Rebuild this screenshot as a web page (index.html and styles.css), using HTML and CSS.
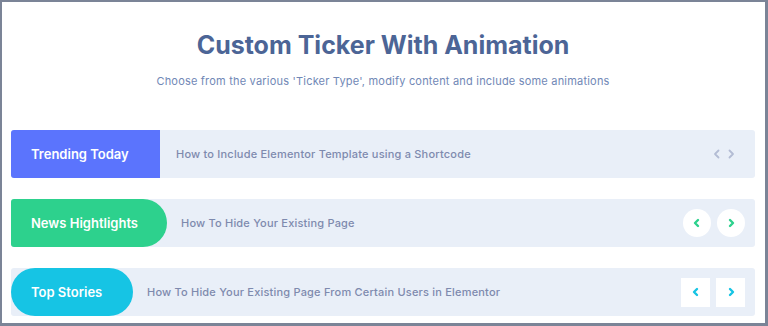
FILE: index.html
```html
<!DOCTYPE html>
<html lang="en">
<head>
    <meta charset="UTF-8">
    <meta name="viewport" content="width=device-width, initial-scale=1.0">
    <title>Custom Ticker With Animation</title>
    <link rel="stylesheet" href="styles.css">
</head>
<body>
    <div class="frame">
        <div class="header">
            <h2>Custom Ticker With Animation</h2>
            <p>Choose from the various 'Ticker Type', modify content and include some animations</p>
        </div>

        <div class="tickers">
            <div class="ticker ticker-trending">
                <div class="label">Trending Today</div>
                <div class="content">How to Include Elementor Template using a Shortcode</div>
                <div class="nav">
                    <span class="nav-btn"><svg viewBox="0 0 10 10"><polyline points="6.5,1.5 3,5 6.5,8.5"/></svg></span>
                    <span class="nav-btn"><svg viewBox="0 0 10 10"><polyline points="3.5,1.5 7,5 3.5,8.5"/></svg></span>
                </div>
            </div>

            <div class="ticker ticker-news">
                <div class="label">News Hightlights</div>
                <div class="content">How To Hide Your Existing Page</div>
                <div class="nav">
                    <span class="nav-btn"><svg viewBox="0 0 10 10"><polyline points="6,2 3,5 6,8"/></svg></span>
                    <span class="nav-btn"><svg viewBox="0 0 10 10"><polyline points="4,2 7,5 4,8"/></svg></span>
                </div>
            </div>

            <div class="ticker ticker-top">
                <div class="label">Top Stories</div>
                <div class="content">How To Hide Your Existing Page From Certain Users in Elementor</div>
                <div class="nav">
                    <span class="nav-btn"><svg viewBox="0 0 10 10"><polyline points="6,2 3,5 6,8"/></svg></span>
                    <span class="nav-btn"><svg viewBox="0 0 10 10"><polyline points="4,2 7,5 4,8"/></svg></span>
                </div>
            </div>
        </div>
    </div>
</body>
</html>
```

FILE: styles.css
```css
body {
    font-family: 'Inter', 'Roboto', sans-serif;
    background-color: #fff;
    margin: 0;
    padding: 0;
}

.frame {
    box-sizing: border-box;
    height: 326px;
    border-style: solid;
    border-color: #7b8497;
    border-width: 2px 3px 3px 2px;
    padding: 0 10px 0 9px;
}

.header {
    text-align: center;
    padding-top: 27px;
}

.header h2 {
    margin: 0;
    font-size: 25px;
    font-weight: 700;
    color: #4c6596;
    line-height: 32px;
}

.header p {
    margin: 13px 0 0;
    font-size: 11px;
    letter-spacing: 0.2px;
    color: #7188b6;
    line-height: 14px;
}

.tickers {
    display: flex;
    flex-direction: column;
    gap: 21px;
    margin-top: 42px;
}

.ticker {
    display: flex;
    align-items: center;
    height: 48px;
    background-color: #e9eff8;
    border-radius: 3px;
}

.label {
    height: 100%;
    display: flex;
    align-items: center;
    padding-left: 20px;
    box-sizing: border-box;
    color: #fff;
    font-size: 13px;
    font-weight: 600;
    flex-shrink: 0;
}

.content {
    flex: 1;
    color: #7e8aae;
    font-size: 11px;
    font-weight: 500;
    letter-spacing: 0.2px;
}

.nav {
    display: flex;
    gap: 6px;
    margin-right: 10px;
}

.nav-btn {
    width: 29px;
    height: 29px;
    display: flex;
    align-items: center;
    justify-content: center;
    background-color: #fff;
}

.nav-btn svg {
    width: 10px;
    height: 10px;
    fill: none;
    stroke-width: 2.4;
    stroke-linecap: round;
    stroke-linejoin: round;
}

/* trending */
.ticker-trending .label {
    width: 149px;
    background-color: #5b74fd;
    border-radius: 3px 0 0 3px;
}

.ticker-trending .content {
    padding-left: 16px;
}

.ticker-trending .nav {
    gap: 0;
    margin-right: 17px;
}

.ticker-trending .nav-btn {
    width: 14px;
    height: 14px;
    background: none;
}

.ticker-trending .nav-btn svg {
    stroke: #b3bcd4;
    stroke-width: 1.8;
}

/* news */
.ticker-news .label {
    width: 156px;
    background-color: #2dd18d;
    border-radius: 3px 24px 24px 3px;
}

.ticker-news .content {
    padding-left: 14px;
}

.ticker-news .nav-btn {
    border-radius: 50%;
    width: 28px;
    height: 28px;
}

.ticker-news .nav-btn svg {
    stroke: #2dd18d;
}

/* top stories */
.ticker-top .label {
    width: 122px;
    background-color: #16c4e4;
    border-radius: 24px;
}

.ticker-top .content {
    padding-left: 14px;
}

.ticker-top .nav-btn svg {
    stroke: #16c4e4;
}
```
